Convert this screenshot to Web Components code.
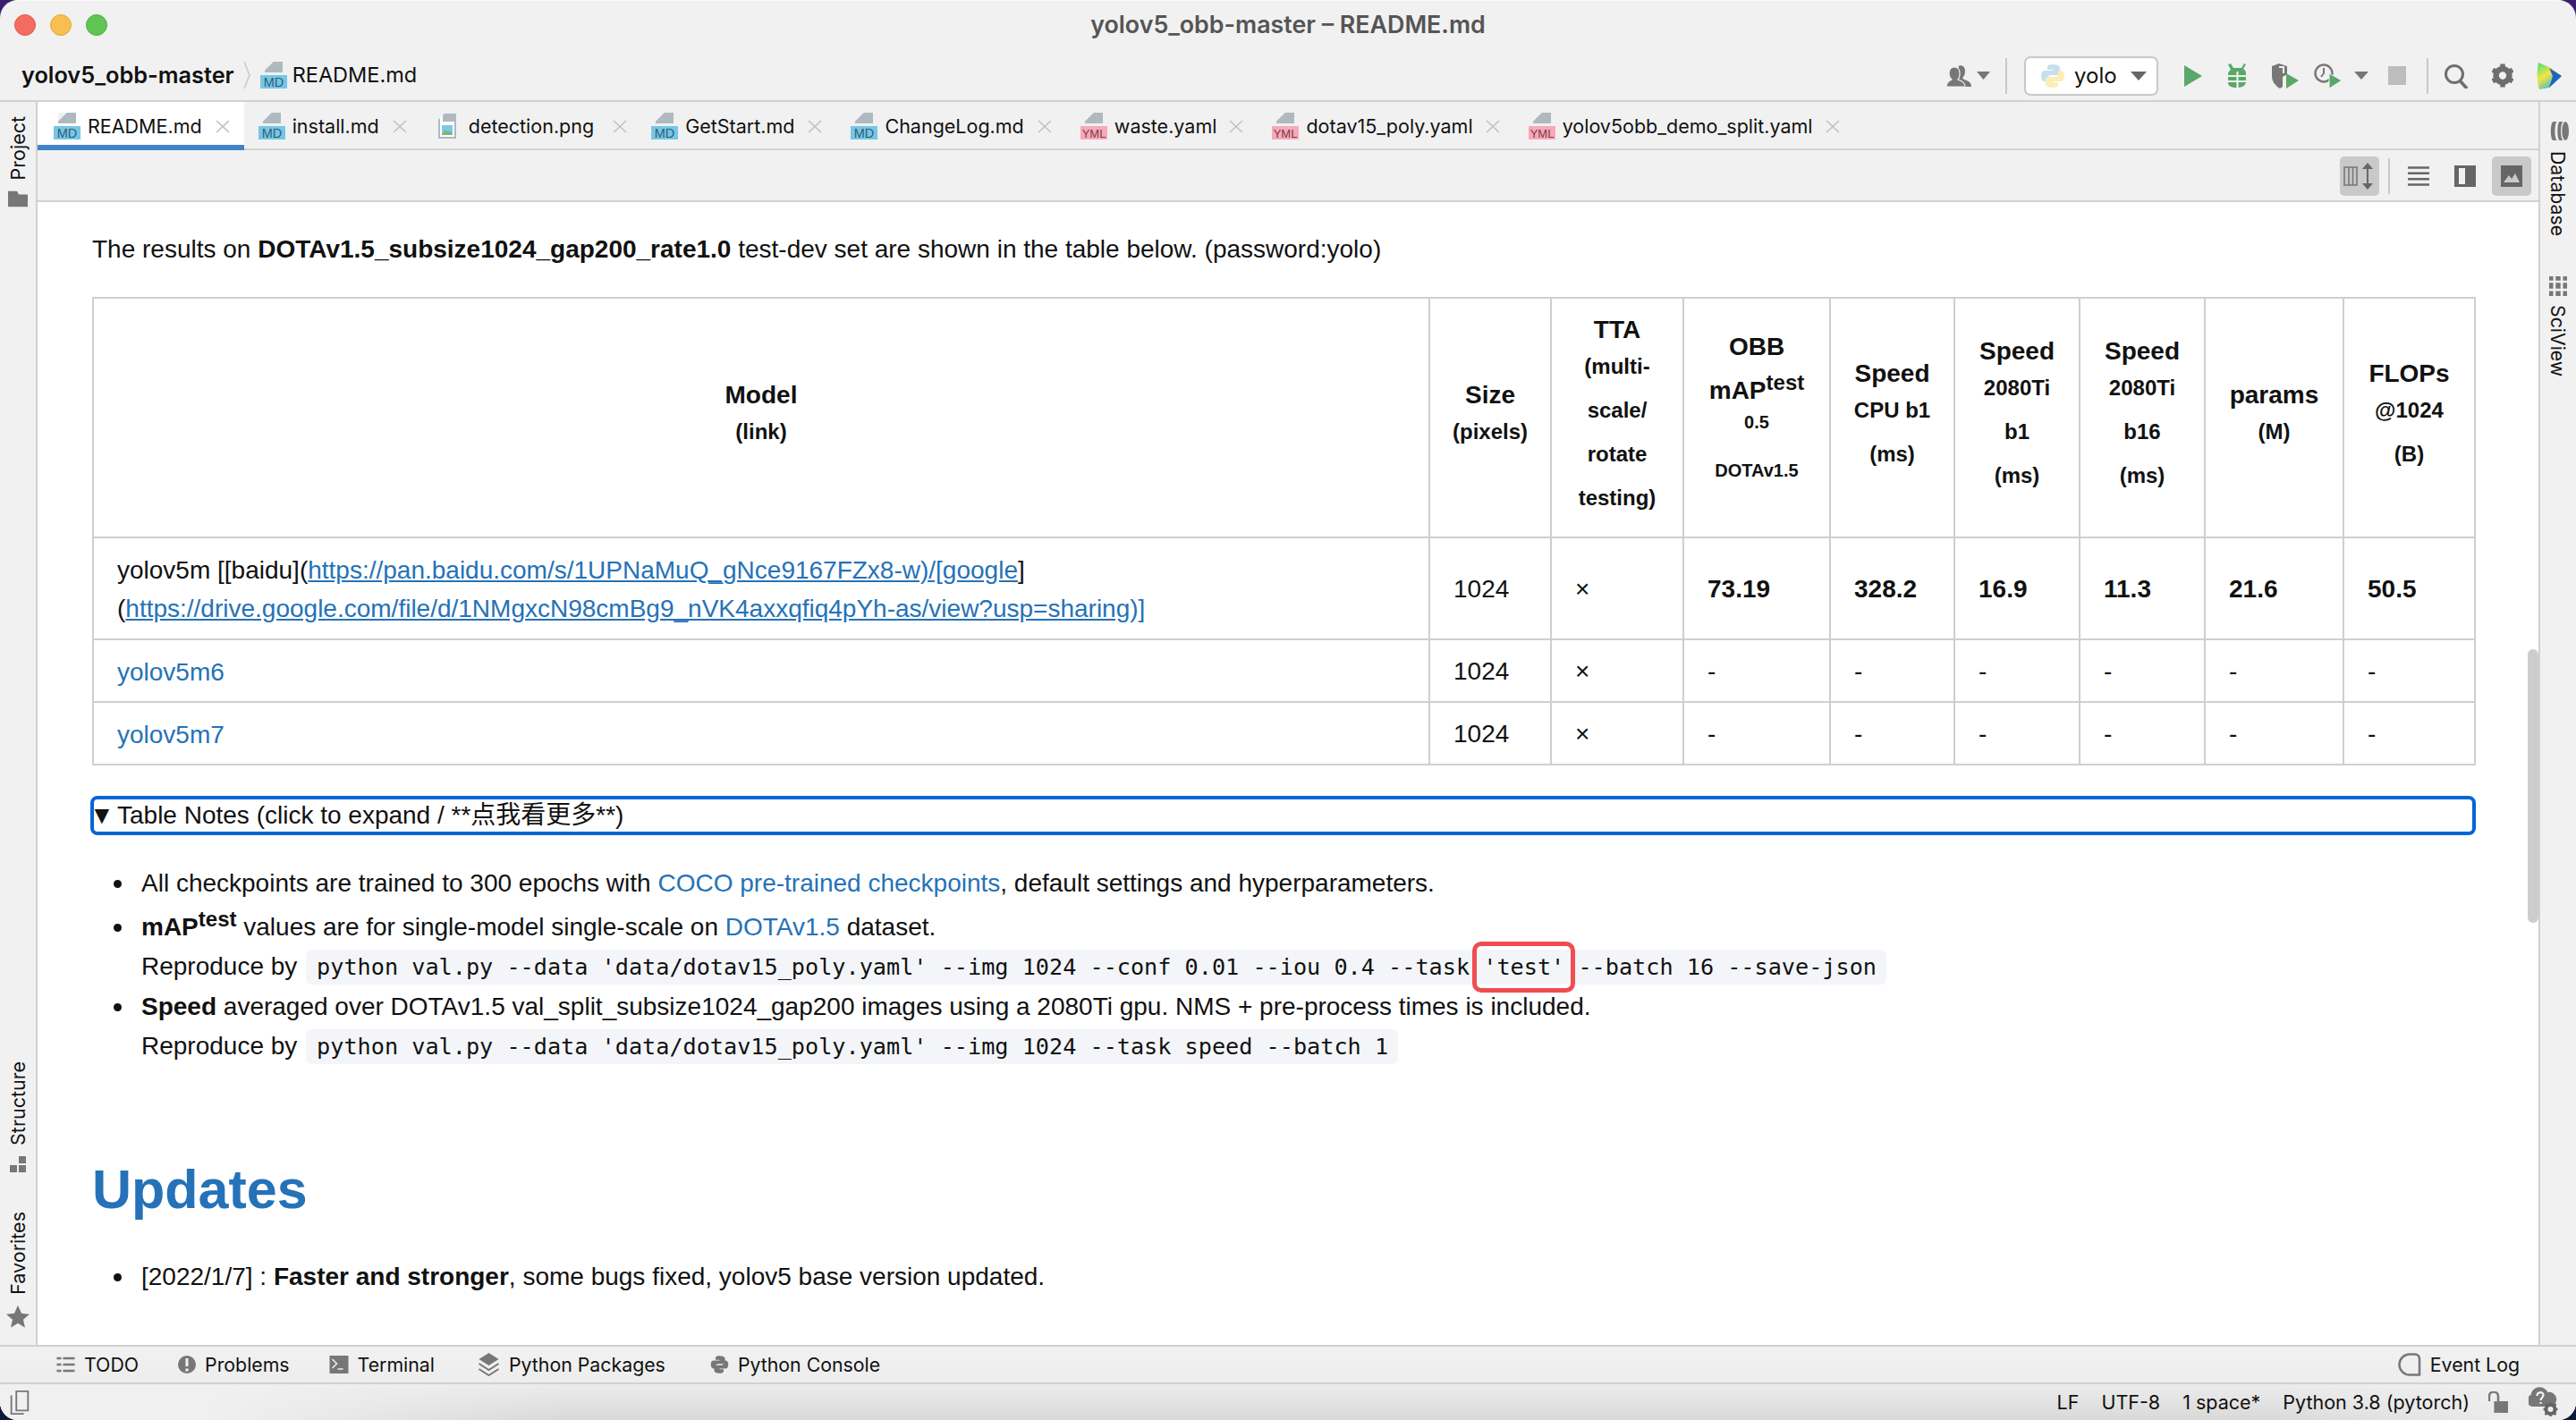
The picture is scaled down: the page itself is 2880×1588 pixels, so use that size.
<!DOCTYPE html>
<html>
<head>
<meta charset="utf-8">
<style>
  html, body { margin: 0; height: 100%; background: linear-gradient(180deg, #3b1f6e, #0e1a3a); overflow: hidden; }
</style>
</head>
<body>
<ide-window>
  <title-bar slot="title" text="yolov5_obb-master – README.md"></title-bar>
  <nav-bar slot="nav"></nav-bar>
  <tab-bar slot="tabs">
    <editor-tab kind="md" active>README.md</editor-tab>
    <editor-tab kind="md">install.md</editor-tab>
    <editor-tab kind="png">detection.png</editor-tab>
    <editor-tab kind="md">GetStart.md</editor-tab>
    <editor-tab kind="md">ChangeLog.md</editor-tab>
    <editor-tab kind="yml">waste.yaml</editor-tab>
    <editor-tab kind="yml">dotav15_poly.yaml</editor-tab>
    <editor-tab kind="yml">yolov5obb_demo_split.yaml</editor-tab>
  </tab-bar>
  <left-strip slot="left"></left-strip>
  <preview-toolbar slot="toolbar"></preview-toolbar>
  <readme-view slot="content"></readme-view>
  <right-strip slot="right"></right-strip>
  <tool-bar slot="tools"></tool-bar>
  <status-bar slot="status"></status-bar>
</ide-window>

<script>
const UI_FONT = `Inter, "Liberation Sans", sans-serif`;

// little helper, every element just sets its shadow markup
class Base extends HTMLElement {
  constructor() {
    super();
    this.attachShadow({mode: 'open'});
    this.shadowRoot.innerHTML = this.render();
  }
  render() { return ''; }
}

class IdeWindow extends Base {
  render() { return `
    <style>
      :host { display: flex; flex-direction: column; height: 1588px; width: 2880px; background: #f1f1f1;
              border-radius: 20px; overflow: hidden; font-family: ${UI_FONT}; color: #111; }
      .middle { flex: 1; display: flex; min-height: 0; }
      .editor { flex: 1; display: flex; flex-direction: column; min-width: 0; }
      .body { flex: 1; min-height: 0; position: relative; }
    </style>
    <slot name="title"></slot>
    <slot name="nav"></slot>
    <div class="middle">
      <slot name="left"></slot>
      <div class="editor">
        <slot name="tabs"></slot>
        <slot name="toolbar"></slot>
        <div class="body"><slot name="content"></slot></div>
      </div>
      <slot name="right"></slot>
    </div>
    <slot name="tools"></slot>
    <slot name="status"></slot>`; }
}

class TitleBar extends Base {
  render() { return `
    <style>
      :host { display: flex; height: 57px; box-sizing: border-box; align-items: center; justify-content: center; position: relative;
              font-size: 26.800px; font-weight: 600; color: #555; padding-bottom: 5px; border-top: 1px solid #fafafa; }
      .lights { position: absolute; left: 16px; top: 15px; display: flex; gap: 16px; }
      .lights i { width: 24px; height: 24px; border-radius: 50%; display: block; box-sizing: border-box; }
      .r { background: #f46b5f; border: 1px solid #e0584d; }
      .y { background: #f6bf4f; border: 1px solid #dfa93c; }
      .g { background: #61c554; border: 1px solid #4fb044; }
    </style>
    <div class="lights"><i class="r"></i><i class="y"></i><i class="g"></i></div>
    <span>${this.getAttribute('text')}</span>`; }
}

const fileIcon = (kind) => {
  if (kind === 'png') return `<svg width="20" height="28" viewBox="0 0 20 28"><path d="M1 1h18v26H1z" fill="#fff" stroke="#aeb9c0" stroke-width="2"/><path d="M5 0h15v9H5z" fill="#aeb9c0"/><path d="M0 0h7L0 7z" fill="#f1f1f1"/><path d="M4 13h12v11H4z" fill="#7dc8e6"/><path d="M4 24l4-6 3 3 2-2 3 5z" fill="#7cb66a"/></svg>`;
  const yml = kind === 'yml';
  return `<svg width="30" height="30" viewBox="0 0 30 30"><path d="M5 0h20v12H5z" fill="#aeb9c0"/><path d="M5 0h10L5 10z" fill="#f1f1f1"/><path d="M5 10L15 0v10z" fill="#aeb9c0"/><rect x="0" y="15" width="30" height="15" fill="${yml ? '#f7a9b8' : '#76c6e6'}"/><text x="15" y="28" text-anchor="middle" font-family="Liberation Sans, sans-serif" font-size="${yml ? 13 : 14.500}" fill="${yml ? '#7a3a48' : '#2d5f78'}">${yml ? 'YML' : 'MD'}</text></svg>`;
};

class NavBar extends Base {
  render() { return `
    <style>
      :host { display: flex; height: 57px; box-sizing: border-box; align-items: center; border-bottom: 2px solid #d1d1d1;
              padding: 0 0 0 24px; font-size: 23.500px; }
      b { font-weight: 600; font-size: 25.300px; }
      .crumb { display: flex; align-items: center; flex: 1; padding-bottom: 2px; }
      .right { display: flex; align-items: center; height: 100%; }
      .sep { width: 2px; height: 40px; background: #c9c9c9; }
      .combo { display: flex; align-items: center; width: 150px; height: 44px; box-sizing: border-box; background: #fff;
               border: 2px solid #c8c8c8; border-radius: 7px; padding-left: 16px; margin: 0 29px 0 19px; font-size: 24px; }
      svg { display: block; flex: none; }
    </style>
    <div class="crumb">
      <b>yolov5_obb-master</b>
      <svg style="margin:0 11px 0 10px" width="8" height="30" viewBox="0 0 8 30"><path d="M1 0l6 15L1 30" fill="none" stroke="#c8c8c8" stroke-width="1.500"/></svg>
      ${fileIcon('md')}
      <span style="margin-left:6px">README.md</span>
    </div>
    <div class="right">
      <svg width="28" height="24" viewBox="0 0 28 24" style="margin-right:6px"><path d="M15 0c4 0 6 3 6 6 0 4-1 6-3 8l2 2c4 1 8 3 8 8H14V8c0-5-1-7 1-8z" fill="#777"/><path d="M9 2c4 0 6 3 6 7 0 3-1 6-2 7 3 1 8 3 8 8H0c0-5 4-7 6-8-2-2-3-4-3-7 0-4 2-7 6-7z" fill="#777" stroke="#f1f1f1" stroke-width="1.200"/></svg>
      <svg width="15" height="9" viewBox="0 0 15 9" style="margin-right:17px"><path d="M0 0h15L7.500 9z" fill="#777"/></svg>
      <div class="sep"></div>
      <div class="combo">
        <svg width="28" height="28" viewBox="0 0 28 28"><path d="M14 1c-6 0-6 3-6 3v3h6v1H5S1 8 1 14s4 6 4 6h3v-3s0-4 4-4h6s4 0 4-4V5s0-4-8-4z" fill="#c5dfee"/><path d="M14 27c6 0 6-3 6-3v-3h-6v-1h9s4 0 4-6-4-6-4-6h-3v3s0 4-4 4h-6s-4 0-4 4v4s0 4 8 4z" fill="#fbeeb5"/></svg>
        <span style="margin-left:10px">yolo</span>
        <svg style="margin-left:15px" width="18" height="10" viewBox="0 0 18 10"><path d="M0 0h18L9 10z" fill="#666"/></svg>
      </div>
      <svg width="20" height="24" viewBox="0 0 20 24" style="margin-right:27px"><path d="M0 0l20 12L0 24z" fill="#59a869"/></svg>
      <svg width="25" height="28" viewBox="0 0 25 28" style="margin-right:25px"><path d="M5 0l3 5h9l3-5 2 1-3 5c2 1 3 3 3 5v10c0 3-4 6-10 6S2 25 2 22V12c0-2 1-4 3-5L2 1z" fill="#59a869"/><path d="M2 14h21M2 20h21M12.500 9v19" stroke="#f1f1f1" stroke-width="2.200"/></svg>
      <svg width="31" height="28" viewBox="0 0 31 28" style="margin-right:17px"><path d="M1 3l8-3 9 3v9l-5 3v11l-3 2c-5-3-9-8-9-14z" fill="#777"/><path d="M9 4h5v7" fill="none" stroke="#f1f1f1" stroke-width="2"/><path d="M17 11l14 8-14 9z" fill="#59a869"/></svg>
      <svg width="31" height="28" viewBox="0 0 31 28" style="margin-right:14px"><circle cx="11" cy="11" r="9.500" fill="none" stroke="#777" stroke-width="2.400"/><path d="M11 5v6l-3 4" fill="none" stroke="#777" stroke-width="2"/><path d="M17 11l14 8-14 9z" fill="#59a869" stroke="#f1f1f1"/></svg>
      <svg width="16" height="9" viewBox="0 0 16 9" style="margin-right:22px"><path d="M0 0h16L8 9z" fill="#777"/></svg>
      <div style="width:20px;height:21px;background:#bdbdbd;margin-right:23px"></div>
      <div class="sep"></div>
      <svg width="29" height="28" viewBox="0 0 29 28" style="margin:0 25px 0 17px"><circle cx="12" cy="12" r="9.500" fill="none" stroke="#6e6e6e" stroke-width="3"/><path d="M18 19l8 9" stroke="#6e6e6e" stroke-width="3.600"/></svg>
      <svg width="24" height="27" viewBox="0 0 26 28" style="margin-right:26px"><path d="M13 6a8 8 0 100 16 8 8 0 000-16z" fill="none" stroke="#6e6e6e" stroke-width="7"/><path d="M13 0v5M13 23v5M1 7l4 2.500M21 18.500l4 2.500M1 21l4-2.500M21 9.500L25 7" stroke="#6e6e6e" stroke-width="6"/></svg>
      <svg width="28" height="30" viewBox="0 0 28 30" style="margin-right:16px"><defs><linearGradient id="jb" x1="0" y1="0" x2="0.600" y2="1"><stop offset="0" stop-color="#3ddc84"/><stop offset=".5" stop-color="#f5e642"/><stop offset="1" stop-color="#2fb8d8"/></linearGradient></defs><path d="M2 0l14 6 12 9-14 13-11 2C0 20 0 10 2 0z" fill="url(#jb)"/><path d="M14 6l14 9-14 13 4-13z" fill="#1d63c6"/></svg>
    </div>`; }
}

class TabBar extends Base {
  render() { return `
    <style>
      :host { display: flex; height: 54px; box-sizing: border-box; border-bottom: 2px solid #d1d1d1; }
    </style>
    <slot></slot>`; }
}

class EditorTab extends Base {
  render() {
    const k = this.getAttribute('kind');
    const pad = k === 'png' ? '0 11px 0 19px' : '0 16px';
    return `
    <style>
      :host { display: flex; align-items: center; height: 54px; box-sizing: border-box; padding: ${pad}; gap: ${k === 'png' ? 14 : 8}px;
              font-size: 21.500px; flex: none; }
      :host([active]) { background: #fff; box-shadow: inset 0 -6px 0 #4083c9; padding-left: 18px; }
      svg { display: block; flex: none; }
      .x { margin-left: ${k === 'yml' ? 6 : 7}px; }
    </style>
    ${fileIcon(k)}
    <span><slot></slot></span>
    <svg class="x" width="16" height="15" viewBox="0 0 16 15"><path d="M1 1l14 13M15 1L1 14" stroke="#bfc3c6" stroke-width="1.700"/></svg>`;
  }
}

class PreviewToolbar extends Base {
  render() { return `
    <style>
      :host { display: flex; height: 58px; box-sizing: border-box; border-bottom: 2px solid #d1d1d1; align-items: center;
              justify-content: flex-end; padding-right: 8px; padding-top: 1px; }
      .btn { width: 44px; height: 44px; display: flex; align-items: center; justify-content: center; border-radius: 5px; }
      .on { background: #c9c9c9; }
      .sep { width: 2px; height: 40px; background: #c9c9c9; margin: 0 10px; }
      svg { display: block; }
    </style>
    <div class="btn on"><svg width="36" height="30" viewBox="0 0 36 30"><path d="M1 5h14v20H1zM6 5v20M10.500 5v20" fill="none" stroke="#777" stroke-width="1.600"/><path d="M27 1v28" stroke="#666" stroke-width="2"/><path d="M27 0l6 7H21zM27 30l6-7H21z" fill="#666"/></svg></div>
    <div class="sep"></div>
    <div class="btn"><svg width="24" height="22" viewBox="0 0 24 22"><path d="M0 1.500h24M0 7.800h24M0 14.200h24M0 20.500h24" stroke="#666" stroke-width="2.600"/></svg></div>
    <div class="btn" style="margin-left:8px"><svg width="24" height="24" viewBox="0 0 24 24"><path d="M0 0h24v24H0z" fill="#666"/><path d="M5 3h7v18H5z" fill="#f1f1f1"/></svg></div>
    <div class="btn on" style="margin-left:8px"><svg width="24" height="24" viewBox="0 0 24 24"><path d="M0 0h24v24H0z" fill="#666"/><path d="M3 19l6-8 3 4 4-6 5 10z" fill="#c9c9c9"/></svg></div>`; }
}

class LeftStrip extends Base {
  render() { return `
    <style>
      :host { display: flex; flex-direction: column; width: 42px; box-sizing: border-box; border-right: 2px solid #d1d1d1;
              font-size: 21.500px; align-items: center; }
      .item { writing-mode: vertical-rl; transform: rotate(180deg); display: flex; align-items: center; gap: 12px; }
      .fill { flex: 1; }
      svg { display: block; }
    </style>
    <div class="item" style="margin-top:16px">
      <svg style="transform:rotate(180deg)" width="22" height="18" viewBox="0 0 22 18"><path d="M0 0h10l2 4h10v14H0z" fill="#777"/></svg>
      <span>Project</span>
    </div>
    <div class="fill"></div>
    <div class="item" style="margin-bottom:44px">
      <svg style="transform:rotate(180deg)" width="18" height="18" viewBox="0 0 18 18"><path d="M10 0h8v8h-8zM0 10h8v8H0zM10 10h8v8h-8z" fill="#777"/></svg>
      <span>Structure</span>
    </div>
    <div class="item" style="margin-bottom:19px">
      <svg style="transform:rotate(180deg)" width="26" height="25" viewBox="0 0 26 25"><path d="M13 0l4 9 9 1-7 6 2 9-8-5-8 5 2-9-7-6 9-1z" fill="#777"/></svg>
      <span>Favorites</span>
    </div>`; }
}

class RightStrip extends Base {
  render() { return `
    <style>
      :host { display: flex; flex-direction: column; width: 42px; box-sizing: border-box; border-left: 2px solid #d1d1d1;
              font-size: 21.300px; align-items: center; padding-top: 21px; }
      .item { writing-mode: vertical-rl; display: flex; align-items: center; gap: 11px; }
      svg { display: block; transform: rotate(90deg); }
    </style>
    <div class="item" style="margin-bottom:46px">
      <svg width="23" height="23" viewBox="0 0 22 24"><ellipse cx="11" cy="4" rx="11" ry="4" fill="#777"/><path d="M0 7c3 3 19 3 22 0v4c-3 3-19 3-22 0zM0 14c3 3 19 3 22 0v4c0 4-22 4-22 0z" fill="#777"/></svg>
      <span>Database</span>
    </div>
    <div class="item">
      <svg width="22" height="20" viewBox="0 0 24 22"><path d="M0 0h5v5H0zM8 0h7v5H8zM18 0h6v5h-6zM0 8h5v6H0zM8 8h7v6H8zM18 8h6v6h-6zM0 17h5v5H0zM8 17h7v5H8zM18 17h6v5h-6z" fill="#777"/></svg>
      <span>SciView</span>
    </div>`; }
}

class ToolBar extends Base {
  render() { return `
    <style>
      :host { display: flex; height: 44px; box-sizing: border-box; border-top: 2px solid #d1d1d1; border-bottom: 2px solid #d1d1d1;
              align-items: center; padding: 0 63px 0 63px; font-size: 21.300px; gap: 44px;
              background: linear-gradient(180deg, #f1f1f1, #ededed); }
      .it { display: flex; align-items: center; gap: 10px; }
      svg { display: block; flex: none; }
      .grow { flex: 1; }
    </style>
    <div class="it"><svg width="21" height="18" viewBox="0 0 20 18"><path d="M0 2h5M7 2h13M0 9h5M7 9h13M0 16h5M7 16h13" stroke="#777" stroke-width="2.400"/></svg>TODO</div>
    <div class="it"><svg width="20" height="22" viewBox="0 0 20 22"><circle cx="10" cy="11" r="10" fill="#777"/><path d="M10 4v9M10 15.500v3" stroke="#f1f1f1" stroke-width="3"/></svg>Problems</div>
    <div class="it"><svg width="22" height="20" viewBox="0 0 21 20"><path d="M0 0h21v20H0z" fill="#777"/><path d="M3 4l5 5-5 5M9 15h6" fill="none" stroke="#f1f1f1" stroke-width="1.500"/></svg>Terminal</div>
    <div class="it" style="margin-left:4px"><svg width="25" height="26" viewBox="0 0 24 26"><path d="M12 0l11 7-11 7L1 7z" fill="#777"/><path d="M1 12l11 7 11-7M1 18l11 7 11-7" fill="none" stroke="#777" stroke-width="2"/></svg>Python Packages</div>
    <div class="it" style="margin-left:6px"><svg width="21" height="24" viewBox="0 0 28 28"><path d="M14 1c-6 0-6 3-6 3v3h6v1H5S1 8 1 14s4 6 4 6h3v-3s0-4 4-4h6s4 0 4-4V5s0-4-8-4z" fill="#777"/><path d="M14 27c6 0 6-3 6-3v-3h-6v-1h9s4 0 4-6-4-6-4-6h-3v3s0 4-4 4h-6s-4 0-4 4v4s0 4 8 4z" fill="#777"/></svg>Python Console</div>
    <div class="grow"></div>
    <div class="it"><svg width="26" height="26" viewBox="0 0 26 26"><path d="M13 1.500h6a5 5 0 015 5v18H13a11.500 11.500 0 010-23z" fill="none" stroke="#777" stroke-width="2.500"/></svg>Event Log</div>`; }
}

class StatusBar extends Base {
  render() { return `
    <style>
      :host { display: flex; height: 40px; box-sizing: border-box; align-items: center; justify-content: flex-end;
              padding: 0 20px 0 16px; font-size: 21.500px; position: relative;
              background: linear-gradient(90deg, #f0f0f0 0%, #f0f0f0 8%, transparent 22%, transparent 88%, #f0f0f0 100%), linear-gradient(180deg, #ececec, #d9d9d9); }
      .clip { position: absolute; left: 11px; top: 7px; }
      span { margin-right: 25px; }
      svg { display: block; flex: none; }
    </style>
    <svg class="clip" width="22" height="28" viewBox="0 0 22 30"><path d="M7 1h14v23H7zM1 6v22h15" fill="none" stroke="#777" stroke-width="2"/></svg>
    <span>LF</span><span>UTF-8</span><span>1 space*</span><span style="margin-right:21px">Python 3.8 (pytorch)</span>
    <svg width="22" height="24" viewBox="0 0 24 26" style="margin-right:23px"><path d="M1 12V6a5.500 5.500 0 0111 0v6" fill="none" stroke="#777" stroke-width="2.800"/><path d="M7 12h17v14H7z" fill="#777"/></svg>
    <svg width="33" height="34" viewBox="0 0 32 34"><path d="M3 22a7 7 0 01-1-13A10 10 0 0121 6a8 8 0 013 16z" fill="#777"/><path d="M9 10c0-5 7-5 7-1 0 3-3 3-3 6M13 17v2" fill="none" stroke="#f1f1f1" stroke-width="2.200"/><circle cx="24" cy="25" r="5" fill="none" stroke="#666" stroke-width="4"/><path d="M24 17v3M24 30v3M16 25h3M29 25h3M18 19l2 2M28 29l2 2M30 19l-2 2M20 29l-2 2" stroke="#666" stroke-width="2.500"/></svg>`; }
}

class ReadmeView extends Base {
  render() { return `
    <style>
      :host { display: block; position: absolute; inset: 0; background: #fff; overflow: hidden;
              font-family: "Liberation Sans", "Noto Sans CJK SC", sans-serif; font-size: 28px; line-height: 1.5; color: #111;
              padding: 0 31px 0 61px; box-sizing: border-box; }
      a { color: #2572b8; text-decoration: none; }
      a.u { text-decoration: underline; }
      b { font-weight: 700; }
      p { margin: 0; }
      .intro { padding-top: 32px; height: 106px; box-sizing: border-box; }
      .scroll { position: absolute; right: 0; top: 500px; width: 12px; height: 306px; background: #cdcdcd; border-radius: 6px; }
      table { border-collapse: collapse; table-layout: fixed; width: 2663px; }
      th, td { border: 2px solid #cfcfcf; text-align: left; padding: 2px 0 0 26px; }
      th { font-size: 28px; line-height: 42px; text-align: center; padding: 0 0 6px; }
      th .s { font-size: 24px; line-height: 49px; display: block; margin-top: -5px; }
      th .l1 { display: block; line-height: 42px; }
      th .l2 { display: block; line-height: 56px; }
      th .xs { font-size: 20px; line-height: 54px; display: block; margin-top: -20px; }
      th sup { font-size: 24px; line-height: 0; }
      th.obb { padding-bottom: 14px; }
      tr.head { height: 268px; }
      tr.big { height: 114px; }
      tr.row { height: 70px; }
      td.l { padding: 2px 26px 0; line-height: 43px; }
      td.v { font-weight: 700; }
      details-box { margin-top: 34px; }
      ul { margin: 0; padding: 0 0 0 55px; list-style: none; }
      li { line-height: 44px; position: relative; }
      li::before { content: ""; position: absolute; left: -31px; top: 18px; width: 9px; height: 9px; border-radius: 50%; background: #111; }
      li.first { margin-bottom: 5px; }
      .notes { margin-top: 32px; }
      code { font-family: "DejaVu Sans Mono", "Liberation Mono", monospace; font-size: 25.200px; background: #f3f5f8; padding: 5px 11px 5px 12px; margin-left: 2px; border-radius: 7px; }
      h1 { font-size: 61px; color: #2572b8; margin: 0; line-height: 72px; padding-top: 101px; font-weight: 700; }
      .upd { margin-top: 40px; }
    </style>
    <div class="intro">The results on <b>DOTAv1.5_subsize1024_gap200_rate1.0</b> test-dev set are shown in the table below. (password:yolo)</div>
    <table>
      <colgroup><col style="width:1494px"><col style="width:136px"><col style="width:148px"><col style="width:164px"><col style="width:139px"><col style="width:140px"><col style="width:140px"><col style="width:155px"><col style="width:147px"></colgroup>
      <tr class="head">
        <th>Model<span class="s">(link)</span></th>
        <th>Size<span class="s">(pixels)</span></th>
        <th>TTA<span class="s">(multi-<br>scale/<br>rotate<br>testing)</span></th>
        <th class="obb"><span class="l1">OBB</span><span class="l2">mAP<sup>test</sup></span><span class="xs">0.5<br>DOTAv1.5</span></th>
        <th>Speed<span class="s">CPU b1<br>(ms)</span></th>
        <th>Speed<span class="s">2080Ti<br>b1<br>(ms)</span></th>
        <th>Speed<span class="s">2080Ti<br>b16<br>(ms)</span></th>
        <th>params<span class="s">(M)</span></th>
        <th>FLOPs<span class="s">@1024<br>(B)</span></th>
      </tr>
      <tr class="big">
        <td class="l">yolov5m [[baidu](<a class="u" href="#">https://pan.baidu.com/s/1UPNaMuQ_gNce9167FZx8-w)/[google</a>]<br>(<a class="u" href="#">https://drive.google.com/file/d/1NMgxcN98cmBg9_nVK4axxqfiq4pYh-as/view?usp=sharing)]</a></td>
        <td>1024</td><td>×</td><td class="v">73.19</td><td class="v">328.2</td><td class="v">16.9</td><td class="v">11.3</td><td class="v">21.6</td><td class="v">50.5</td>
      </tr>
      <tr class="row"><td class="l"><a href="#">yolov5m6</a></td><td>1024</td><td>×</td><td>-</td><td>-</td><td>-</td><td>-</td><td>-</td><td>-</td></tr>
      <tr class="row"><td class="l"><a href="#">yolov5m7</a></td><td>1024</td><td>×</td><td>-</td><td>-</td><td>-</td><td>-</td><td>-</td><td>-</td></tr>
    </table>
    <details-box>Table Notes (click to expand / **点我看更多**)</details-box>
    <ul class="notes">
      <li class="first">All checkpoints are trained to 300 epochs with <a href="#">COCO pre-trained checkpoints</a>, default settings and hyperparameters.</li>
      <li><b>mAP<sup style="font-size:24px;line-height:0">test</sup></b> values are for single-model single-scale on <a href="#">DOTAv1.5</a> dataset.<br>
        Reproduce by <code>python val.py --data 'data/dotav15_poly.yaml' --img 1024 --conf 0.01 --iou 0.4 --task <mark-box>'test'</mark-box> --batch 16 --save-json</code></li>
      <li><b>Speed</b> averaged over DOTAv1.5 val_split_subsize1024_gap200 images using a 2080Ti gpu. NMS + pre-process times is included.<br>
        Reproduce by <code>python val.py --data 'data/dotav15_poly.yaml' --img 1024 --task speed --batch 1</code></li>
    </ul>
    <h1>Updates</h1>
    <ul class="upd"><li>[2022/1/7] : <b>Faster and stronger</b>, some bugs fixed, yolov5 base version updated.</li></ul>
    <div class="scroll"></div>`; }
}

class DetailsBox extends Base {
  render() { return `
    <style>
      :host { display: block; width: 2667px; height: 44px; box-sizing: border-box; border: 4px solid #0366d6; border-radius: 8px;
              line-height: 36px; font-size: 28px; margin-left: -2px; }
      .t { display: inline-block; width: 31px; margin-left: -5px; }
    </style>
    <span class="t">▼</span><slot></slot>`; }
}

// red box drawn around a word in the code line
class MarkBox extends Base {
  render() { return `
    <style>
      :host { display: inline-block; position: relative; }
      i { position: absolute; left: -12px; right: -12px; top: -7px; bottom: -6px; border: 5px solid #ef4d4f; border-radius: 10px; }
    </style>
    <slot></slot><i></i>`; }
}

customElements.define('ide-window', IdeWindow);
customElements.define('title-bar', TitleBar);
customElements.define('nav-bar', NavBar);
customElements.define('tab-bar', TabBar);
customElements.define('editor-tab', EditorTab);
customElements.define('preview-toolbar', PreviewToolbar);
customElements.define('left-strip', LeftStrip);
customElements.define('right-strip', RightStrip);
customElements.define('tool-bar', ToolBar);
customElements.define('status-bar', StatusBar);
customElements.define('readme-view', ReadmeView);
customElements.define('details-box', DetailsBox);
customElements.define('mark-box', MarkBox);
</script>
</body>
</html>
